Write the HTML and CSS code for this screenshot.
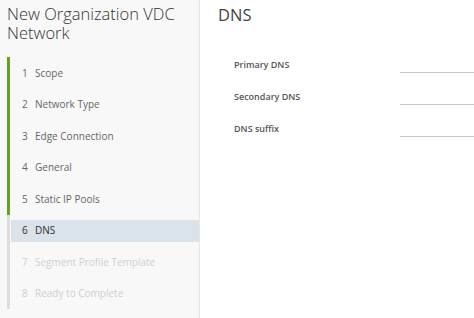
FILE: index.html
```html
<!DOCTYPE html>
<html lang="en">
<head>
  <meta charset="UTF-8" />
  <title>New Organization VDC Network</title>
  <link rel="stylesheet" href="styles.css">
</head>
<body>
  <div class="wizard">
    <div class="sidebar">
      <h2 class="wizard-title">New Organization VDC Network</h2>
      <ul class="steps">
        <li class="step done"><span class="num">1</span>Scope</li>
        <li class="step done"><span class="num">2</span>Network Type</li>
        <li class="step done"><span class="num">3</span>Edge Connection</li>
        <li class="step done"><span class="num">4</span>General</li>
        <li class="step done"><span class="num">5</span>Static IP Pools</li>
        <li class="step current"><span class="num">6</span>DNS</li>
        <li class="step disabled"><span class="num">7</span>Segment Profile Template</li>
        <li class="step disabled"><span class="num">8</span>Ready to Complete</li>
      </ul>
    </div>
    <div class="content">
      <h3 class="page-title">DNS</h3>
      <form class="form">
        <div class="row">
          <label for="dns1">Primary DNS</label>
          <input id="dns1" type="text">
        </div>
        <div class="row">
          <label for="dns2">Secondary DNS</label>
          <input id="dns2" type="text">
        </div>
        <div class="row">
          <label for="suffix">DNS suffix</label>
          <input id="suffix" type="text">
        </div>
      </form>
    </div>
  </div>
</body>
</html>
```

FILE: styles.css
```css
body {
  margin: 0;
  background-color: #ffffff;
  font-family: 'Open Sans', sans-serif;
  color: #565656;
  overflow: hidden;
}

.wizard {
  display: flex;
  height: 318px;
}

.sidebar {
  width: 200px;
  flex-shrink: 0;
  background-color: #f8f8f8;
  border-right: 1px solid #e6e6e6;
  padding-left: 7px;
  box-sizing: border-box;
}

.wizard-title {
  margin: 0;
  padding-top: 4px;
  font-size: 16.5px;
  font-weight: 300;
  line-height: 19px;
  color: #333333;
  height: 53px;
}

.steps {
  list-style: none;
  margin: 0;
  padding: 0;
}

.step {
  display: flex;
  align-items: center;
  height: 31.5px;
  border-left: 3px solid #dddddd;
  font-size: 10px;
  color: #666666;
  padding-left: 12px;
  position: relative;
  z-index: 0;
}

.step.done {
  border-left-color: #62a420;
}

.num {
  width: 13px;
}

.step.current {
  color: #2f2f2f;
}

/* highlight sits a little inside the row */
.step.current::before {
  content: "";
  position: absolute;
  left: 1px;
  right: 0;
  top: 5px;
  bottom: 4px;
  background-color: #dbe3ea;
  z-index: -1;
}

.step.disabled {
  color: #cfcfcf;
}

.content {
  flex: 1;
  padding-left: 18px;
  overflow: hidden;
}

.page-title {
  margin: 0;
  padding-top: 5px;
  font-size: 16.5px;
  font-weight: 400;
  line-height: 20px;
  color: #444444;
}

.form {
  margin-top: 33px;
  padding-left: 16px;
}

.row {
  display: flex;
  align-items: flex-start;
  height: 32px;
}

label {
  width: 166px;
  font-size: 9px;
  font-weight: 600;
  color: #555555;
  line-height: 14px;
}

input {
  border: none;
  border-bottom: 1px solid #c8c8c8;
  width: 74px;
  height: 14px;
  padding: 0;
  margin-top: 0;
  outline: none;
  background: transparent;
}
```
